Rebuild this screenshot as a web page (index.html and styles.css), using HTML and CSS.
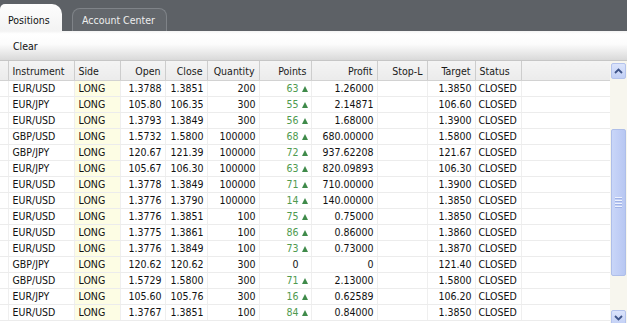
FILE: index.html
```html
<!DOCTYPE html>
<html>
<head>
<meta charset="utf-8">
<link rel="stylesheet" href="styles.css">
</head>
<body>
<div class="tabbar">
  <div class="tab tab-active">Positions</div>
  <div class="tab tab-inactive">Account Center</div>
</div>
<div class="toolbar"><span class="tool">Clear</span></div>
<div class="gridarea">
  <div class="gridwrap">
    <table class="grid">
      <colgroup>
        <col class="c0"><col class="c1"><col class="c2"><col class="c3"><col class="c4"><col class="c5"><col class="c6"><col class="c7"><col class="c8"><col class="c9"><col class="c10"><col class="c11">
      </colgroup>
      <thead>
        <tr>
          <th></th>
          <th class="l">Instrument</th>
          <th class="l">Side</th>
          <th class="r">Open</th>
          <th class="r">Close</th>
          <th class="r">Quantity</th>
          <th class="r">Points</th>
          <th class="r">Profit</th>
          <th class="r stop">Stop-L</th>
          <th class="r">Target</th>
          <th class="l">Status</th>
          <th class="filler"></th>
        </tr>
      </thead>
      <tbody>
        <tr><td></td><td class="l">EUR/USD</td><td class="l side">LONG</td><td class="r">1.3788</td><td class="r">1.3851</td><td class="r">200</td><td class="r pts"><span class="pv">63</span><span class="up"></span></td><td class="r">1.26000</td><td></td><td class="r">1.3850</td><td class="l st">CLOSED</td><td class="filler"></td></tr>
        <tr><td></td><td class="l">EUR/JPY</td><td class="l side">LONG</td><td class="r">105.80</td><td class="r">106.35</td><td class="r">300</td><td class="r pts"><span class="pv">55</span><span class="up"></span></td><td class="r">2.14871</td><td></td><td class="r">106.60</td><td class="l st">CLOSED</td><td class="filler"></td></tr>
        <tr><td></td><td class="l">EUR/USD</td><td class="l side">LONG</td><td class="r">1.3793</td><td class="r">1.3849</td><td class="r">300</td><td class="r pts"><span class="pv">56</span><span class="up"></span></td><td class="r">1.68000</td><td></td><td class="r">1.3900</td><td class="l st">CLOSED</td><td class="filler"></td></tr>
        <tr><td></td><td class="l">GBP/USD</td><td class="l side">LONG</td><td class="r">1.5732</td><td class="r">1.5800</td><td class="r">100000</td><td class="r pts"><span class="pv">68</span><span class="up"></span></td><td class="r">680.00000</td><td></td><td class="r">1.5800</td><td class="l st">CLOSED</td><td class="filler"></td></tr>
        <tr><td></td><td class="l">GBP/JPY</td><td class="l side">LONG</td><td class="r">120.67</td><td class="r">121.39</td><td class="r">100000</td><td class="r pts"><span class="pv">72</span><span class="up"></span></td><td class="r">937.62208</td><td></td><td class="r">121.67</td><td class="l st">CLOSED</td><td class="filler"></td></tr>
        <tr><td></td><td class="l">EUR/JPY</td><td class="l side">LONG</td><td class="r">105.67</td><td class="r">106.30</td><td class="r">100000</td><td class="r pts"><span class="pv">63</span><span class="up"></span></td><td class="r">820.09893</td><td></td><td class="r">106.30</td><td class="l st">CLOSED</td><td class="filler"></td></tr>
        <tr><td></td><td class="l">EUR/USD</td><td class="l side">LONG</td><td class="r">1.3778</td><td class="r">1.3849</td><td class="r">100000</td><td class="r pts"><span class="pv">71</span><span class="up"></span></td><td class="r">710.00000</td><td></td><td class="r">1.3900</td><td class="l st">CLOSED</td><td class="filler"></td></tr>
        <tr><td></td><td class="l">EUR/USD</td><td class="l side">LONG</td><td class="r">1.3776</td><td class="r">1.3790</td><td class="r">100000</td><td class="r pts"><span class="pv">14</span><span class="up"></span></td><td class="r">140.00000</td><td></td><td class="r">1.3850</td><td class="l st">CLOSED</td><td class="filler"></td></tr>
        <tr><td></td><td class="l">EUR/USD</td><td class="l side">LONG</td><td class="r">1.3776</td><td class="r">1.3851</td><td class="r">100</td><td class="r pts"><span class="pv">75</span><span class="up"></span></td><td class="r">0.75000</td><td></td><td class="r">1.3850</td><td class="l st">CLOSED</td><td class="filler"></td></tr>
        <tr><td></td><td class="l">EUR/USD</td><td class="l side">LONG</td><td class="r">1.3775</td><td class="r">1.3861</td><td class="r">100</td><td class="r pts"><span class="pv">86</span><span class="up"></span></td><td class="r">0.86000</td><td></td><td class="r">1.3860</td><td class="l st">CLOSED</td><td class="filler"></td></tr>
        <tr><td></td><td class="l">EUR/USD</td><td class="l side">LONG</td><td class="r">1.3776</td><td class="r">1.3849</td><td class="r">100</td><td class="r pts"><span class="pv">73</span><span class="up"></span></td><td class="r">0.73000</td><td></td><td class="r">1.3870</td><td class="l st">CLOSED</td><td class="filler"></td></tr>
        <tr><td></td><td class="l">GBP/JPY</td><td class="l side">LONG</td><td class="r">120.62</td><td class="r">120.62</td><td class="r">300</td><td class="r pts"><span class="pv zero">0</span><span class="up none"></span></td><td class="r">0</td><td></td><td class="r">121.40</td><td class="l st">CLOSED</td><td class="filler"></td></tr>
        <tr><td></td><td class="l">GBP/USD</td><td class="l side">LONG</td><td class="r">1.5729</td><td class="r">1.5800</td><td class="r">300</td><td class="r pts"><span class="pv">71</span><span class="up"></span></td><td class="r">2.13000</td><td></td><td class="r">1.5800</td><td class="l st">CLOSED</td><td class="filler"></td></tr>
        <tr><td></td><td class="l">EUR/JPY</td><td class="l side">LONG</td><td class="r">105.60</td><td class="r">105.76</td><td class="r">300</td><td class="r pts"><span class="pv">16</span><span class="up"></span></td><td class="r">0.62589</td><td></td><td class="r">106.20</td><td class="l st">CLOSED</td><td class="filler"></td></tr>
        <tr><td></td><td class="l">EUR/USD</td><td class="l side">LONG</td><td class="r">1.3767</td><td class="r">1.3851</td><td class="r">100</td><td class="r pts"><span class="pv">84</span><span class="up"></span></td><td class="r">0.84000</td><td></td><td class="r">1.3850</td><td class="l st">CLOSED</td><td class="filler"></td></tr>
      </tbody>
    </table>
  </div>
  <div class="scrollbar">
    <div class="sbtn sbtn-up">
      <svg width="9" height="6" viewBox="0 0 9 6"><path d="M1 5 L4.5 1.5 L8 5" fill="none" stroke="#3e5488" stroke-width="1.8"/></svg>
    </div>
    <div class="sgap1"></div>
    <div class="thumb">
      <div class="grip"><i></i><i></i><i></i><i></i></div>
    </div>
    <div class="sgap2"></div>
    <div class="sbtn sbtn-down">
      <svg width="9" height="6" viewBox="0 0 9 6"><path d="M1 1 L4.5 4.5 L8 1" fill="none" stroke="#3e5488" stroke-width="1.8"/></svg>
    </div>
  </div>
</div>
</body>
</html>
```

FILE: styles.css
```css
html, body {
  margin: 0;
  padding: 0;
}
body {
  width: 627px;
  height: 323px;
  overflow: hidden;
  background: #ffffff;
  font-family: "DejaVu Sans Condensed", "DejaVu Sans", sans-serif;
  font-stretch: condensed;
  font-size: 10.5px;
  color: #111;
}

/* Tabs */
.tabbar {
  height: 31px;
  background: #5d6166;
  display: flex;
  align-items: flex-end;
  box-sizing: border-box;
}
.tab {
  box-sizing: border-box;
  line-height: 13px;
  white-space: nowrap;
}
.tab-active {
  width: 62px;
  height: 27px;
  padding: 10px 0 0 8px;
  background: linear-gradient(#fdfdfd, #f3f3f3);
  border-radius: 5px 10px 0 0;
  color: #111;
}
.tab-inactive {
  margin-left: 10px;
  width: 95px;
  height: 23px;
  padding: 5px 0 0 9px;
  background: #63676c;
  border: 1px solid #7f8388;
  border-bottom: none;
  border-radius: 8px 8px 0 0;
  color: #eeeeee;
}

/* Toolbar */
.toolbar {
  height: 30px;
  box-sizing: border-box;
  padding-left: 13px;
  line-height: 30px;
  background: linear-gradient(to bottom, #f3f3f3 0%, #ffffff 10%, #fcfcfc 45%, #e6e6e6 80%, #d9d9d9 100%);
  border-bottom: 1px solid #c6c6c6;
}

/* Grid area */
.gridarea {
  display: flex;
  height: 262px;
}
.gridwrap {
  width: 610px;
  overflow: hidden;
}
.grid {
  width: 610px;
  table-layout: fixed;
  border-collapse: collapse;
  border-spacing: 0;
}
.c0 { width: 8px; }
.c1 { width: 66px; }
.c2 { width: 46px; }
.c3 { width: 45px; }
.c4 { width: 42px; }
.c5 { width: 52px; }
.c6 { width: 52px; }
.c7 { width: 66px; }
.c8 { width: 50px; }
.c9 { width: 48px; }
.c10 { width: 46px; }
.c11 { width: 89px; }

.grid th {
  height: 19px;
  padding: 0 4px;
  font-weight: normal;
  color: #1a1a1a;
  background: linear-gradient(#f4f4f4, #ebebeb);
  border-right: 1px solid #cdcdcd;
  border-bottom: 1px solid #d2d2d2;
  white-space: nowrap;
  overflow: hidden;
}
.grid th.filler { border-right: none; }
.grid th.stop { text-overflow: clip; }

.grid td {
  height: 15px;
  padding: 0 3px 0 4px;
  line-height: 15px;
  border-right: 1px solid #efefef;
  border-bottom: 1px solid #ececec;
  white-space: nowrap;
  overflow: hidden;
}
.grid td.filler { border-right: none; }
.l { text-align: left; }
.r { text-align: right; }
.grid td.side { background: #fdfde4; }
.grid td.st { padding-left: 3px; }

.grid td.pts {
  padding-right: 3px;
  color: #4f9a4f;
}
.pv.zero { color: #111; }
.up {
  display: inline-block;
  width: 0;
  height: 0;
  margin-left: 3px;
  border-left: 3px solid transparent;
  border-right: 3px solid transparent;
  border-bottom: 6px solid #3f8a4a;
  vertical-align: 0px;
}
.up.none { border-bottom-color: transparent; }

/* Scrollbar */
.scrollbar {
  width: 17px;
  background: #f7f6ee;
  display: flex;
  flex-direction: column;
  align-items: center;
  padding-top: 2px;
  box-sizing: border-box;
}
.sbtn {
  width: 15px;
  height: 16px;
  box-sizing: border-box;
  border: 1px solid #b4c3ec;
  border-radius: 2px;
  background: linear-gradient(#dbe4fb, #c1cff5);
  display: flex;
  align-items: center;
  justify-content: center;
  flex: none;
}
.sgap1 { height: 50px; flex: none; }
.thumb {
  width: 15px;
  height: 147px;
  box-sizing: border-box;
  border: 1px solid #aebee9;
  border-radius: 2px;
  background: linear-gradient(to right, #c9d6f8, #bfcdf5 60%, #b7c7f2);
  display: flex;
  align-items: center;
  justify-content: center;
  flex: none;
}
.grip {
  display: flex;
  flex-direction: column;
  gap: 1px;
}
.grip i {
  display: block;
  width: 7px;
  height: 1px;
  background: #eef2fd;
  border-bottom: 1px solid #9fb2e6;
}
.sgap2 { height: 34px; flex: none; }
```
